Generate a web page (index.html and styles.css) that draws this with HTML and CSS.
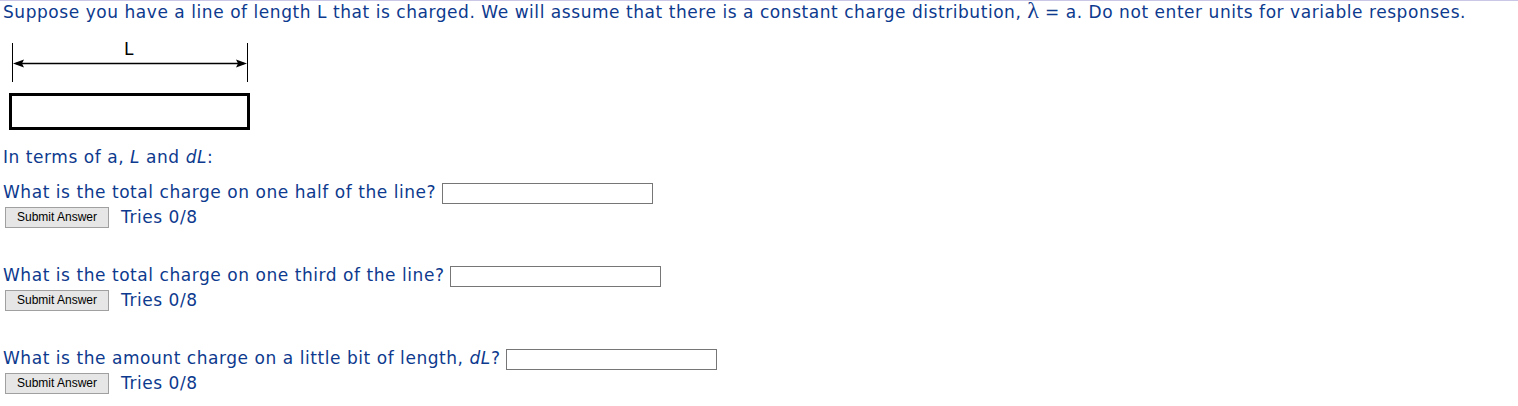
FILE: index.html
```html
<!DOCTYPE html>
<html>
<head>
<meta charset="utf-8">
<link rel="stylesheet" href="styles.css">
</head>
<body>
<div class="page">
  <p class="intro">Suppose you have a line of length L that is charged. We will assume that there is a constant charge distribution, <span class="lambda">λ</span> = a. Do not enter units for variable responses.</p>
  <svg class="diagram" width="252" height="92" viewBox="0 0 252 92">
    <line x1="10.5" y1="3" x2="10.5" y2="42" stroke="#000" stroke-width="1"/>
    <line x1="245.5" y1="3" x2="245.5" y2="42" stroke="#000" stroke-width="1"/>
    <line x1="14" y1="23.5" x2="242" y2="23.5" stroke="#000" stroke-width="1.5"/>
    <polygon points="11,23.5 22,19.5 20,23.5 22,27.5" fill="#000"/>
    <polygon points="245,23.5 234,19.5 236,23.5 234,27.5" fill="#000"/>
    <text x="127" y="15" font-family="DejaVu Sans, sans-serif" font-size="17" text-anchor="middle" fill="#000">L</text>
    <rect x="8.5" y="54.5" width="238" height="34" fill="#fff" stroke="#000" stroke-width="3"/>
  </svg>
  <p class="terms">In terms of a, <i>L</i> and <i>dL</i>:</p>

  <div class="question">
    <div class="qline">What is the total charge on one half of the line? <input type="text" class="answer"></div>
    <div class="subline"><button class="submit">Submit Answer</button><span class="tries">Tries 0/8</span></div>
  </div>

  <div class="question">
    <div class="qline">What is the total charge on one third of the line? <input type="text" class="answer"></div>
    <div class="subline"><button class="submit">Submit Answer</button><span class="tries">Tries 0/8</span></div>
  </div>

  <div class="question">
    <div class="qline">What is the amount charge on a little bit of length, <i>dL</i>? <input type="text" class="answer"></div>
    <div class="subline"><button class="submit">Submit Answer</button><span class="tries">Tries 0/8</span></div>
  </div>
</div>
</body>
</html>
```
FILE: styles.css
```css
html, body {
  margin: 0;
  padding: 0;
  background: #fff;
}
body {
  border-top: 1px solid #c9c6e6;
  font-family: "DejaVu Sans", Verdana, sans-serif;
  font-size: 17px;
  letter-spacing: 0.55px;
  color: #0d3a8e;
}
.page {
  padding-left: 3px;
}
p {
  margin: 0;
}
.intro {
  line-height: 22px;
  white-space: nowrap;
}
.lambda {
  font-family: "Liberation Serif", serif;
  font-size: 24px;
  line-height: 16px;
  letter-spacing: 0;
}
.diagram {
  display: block;
  margin-top: 17px;
  margin-left: -1px;
}
.terms {
  margin-top: 14px;
  line-height: 22px;
}
.question {
  margin-top: 13px;
}
.question + .question {
  margin-top: 36px;
}
.qline {
  line-height: 22px;
  height: 22px;
  display: flex;
  align-items: flex-start;
  white-space: pre;
}
.answer {
  width: 211px;
  height: 21px;
  box-sizing: border-box;
  border: 1px solid #767676;
  margin: 2px 0 0 0;
  padding: 0;
  background: #fff;
}
.subline {
  display: flex;
  align-items: center;
  margin-top: 3px;
}
.submit {
  font-family: "Liberation Sans", Arial, sans-serif;
  font-size: 12px;
  letter-spacing: 0;
  color: #000;
  width: 104px;
  height: 21px;
  box-sizing: border-box;
  border: 1px solid #a0a0a0;
  background: #e6e6e6;
  padding: 0;
  margin: 0 0 0 2px;
}
.tries {
  margin-left: 12px;
  line-height: 22px;
}
```
